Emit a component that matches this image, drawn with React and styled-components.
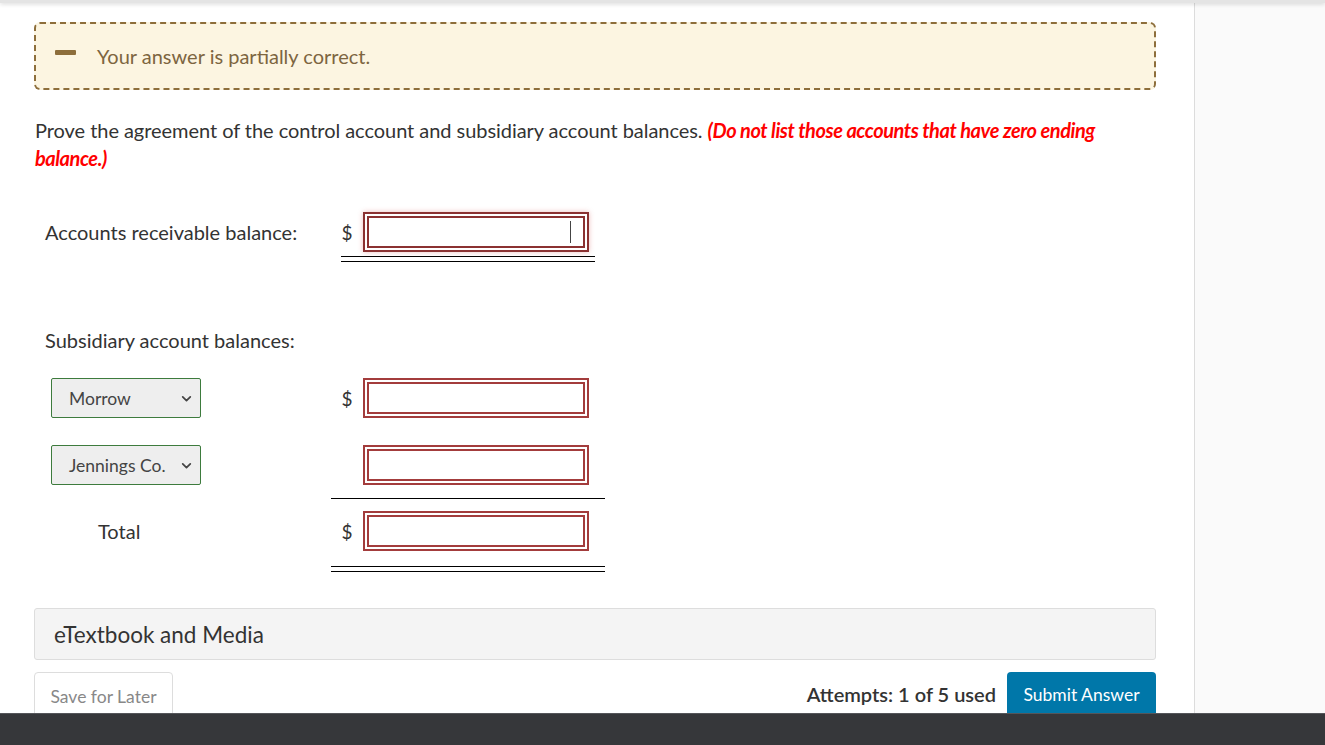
import React from 'react';
import styled, { createGlobalStyle } from 'styled-components';

const GlobalStyle = createGlobalStyle`
    html, body {
        margin: 0;
        padding: 0;
        height: 100%;
        background: #fff;
        font-family: Lato, "Open Sans", sans-serif;
        color: #333;
    }
    #root {
        height: 100%;
    }
`;

const Page = styled.div`
    display: flex;
    height: 745px;
    overflow: hidden;
    position: relative;
`;

const TopShade = styled.div`
    position: absolute;
    top: 0;
    left: 0;
    right: 0;
    height: 3px;
    background: #e4e4e4;
    box-shadow: 0 1px 4px rgba(0, 0, 0, 0.18);
`;

const Main = styled.main`
    width: 1195px;
    box-sizing: border-box;
    padding: 22px 38px 0 34px;
    border-right: 1px solid #dcdcdc;
`;

const Side = styled.aside`
    flex: 1;
    background: #fafafa;
`;

const Feedback = styled.div`
    display: flex;
    align-items: center;
    height: 68px;
    box-sizing: border-box;
    border: 2px dashed #8d6e3b;
    border-radius: 6px;
    background: #fcf5e1;
    padding-left: 19px;
`;

const Minus = styled.span`
    display: inline-block;
    width: 21px;
    height: 5px;
    border-radius: 1px;
    background: #8d6e3b;
    margin: -8px 21px 0 0;
`;

const FeedbackText = styled.span`
    font-size: 20px;
    color: #7d6540;
`;

const Question = styled.p`
    margin: 26px 0 0 1px;
    font-size: 20px;
    line-height: 28px;
    letter-spacing: -0.05px;
`;

const Hint = styled.em`
    color: #f00;
    font-weight: 700;
    letter-spacing: -0.45px;
`;

const Form = styled.div`
    margin-top: 40px;
`;

const Row = styled.div`
    display: flex;
    align-items: center;
    height: ${p => p.h || 40}px;
    margin-top: ${p => p.mt || 0}px;
`;

const LabelCell = styled.div`
    width: 297px;
    box-sizing: border-box;
    padding-left: ${p => p.pl || 11}px;
    font-size: 20px;
`;

const Dollar = styled.span`
    width: 32px;
    text-align: center;
    font-size: 19px;
    color: #333;
`;

const Amount = styled.div`
    width: 226px;
    height: 40px;
    box-sizing: border-box;
    border: 6px double ${p => (p.focus ? '#8b3131' : '#a33c3c')};
    background: #fff;
    display: flex;
    align-items: center;
    justify-content: flex-end;
    padding-right: 12px;
    box-shadow: ${p => (p.focus ? '0 0 5px rgba(200, 60, 60, 0.35)' : 'none')};
`;

const Caret = styled.span`
    width: 1px;
    height: 22px;
    background: #444;
`;

const Rule = styled.div`
    margin-left: ${p => p.ml}px;
    width: ${p => p.w}px;
    height: ${p => (p.double ? 4 : 0)}px;
    border-top: 1px solid #000;
    border-bottom: ${p => (p.double ? '1px solid #000' : 'none')};
    margin-top: ${p => p.mt || 0}px;
`;

const SelectCell = styled.div`
    width: 297px;
`;

const SelectBox = styled.div`
    margin-left: 17px;
    width: 150px;
    height: 40px;
    box-sizing: border-box;
    border: 1px solid #3d7b3d;
    border-radius: 2px;
    background: #eee;
    display: flex;
    align-items: center;
    justify-content: space-between;
    padding: 0 7px 0 17px;
    font-size: 17.5px;
    color: #444;
`;

const Media = styled.div`
    margin-top: 36px;
    height: 52px;
    box-sizing: border-box;
    border: 1px solid #ddd;
    border-radius: 3px;
    background: #f4f4f4;
    display: flex;
    align-items: center;
    padding-left: 19px;
    font-size: 22.5px;
`;

const Actions = styled.div`
    display: flex;
    align-items: flex-start;
    margin-top: 12px;
`;

const SaveButton = styled.button`
    width: 139px;
    height: 48px;
    border: 1px solid #ddd;
    border-radius: 4px;
    background: #fff;
    font-family: Lato, sans-serif;
    font-size: 17.5px;
    color: #888;
`;

const Attempts = styled.span`
    margin-left: auto;
    margin-top: 10px;
    margin-right: 11px;
    font-size: 20px;
    font-weight: 600;
    color: #333;
`;

const SubmitButton = styled.button`
    width: 149px;
    height: 48px;
    border: none;
    border-radius: 4px;
    background: #0077a9;
    font-family: Lato, sans-serif;
    font-size: 17.5px;
    color: #fff;
    padding-bottom: 4px;
`;

const BottomBar = styled.div`
    position: absolute;
    left: 0;
    right: 0;
    bottom: 0;
    height: 31px;
    background: #36373a;
    border-top: 1px solid #55565a;
`;

const Chevron = () => (
    <svg width="13" height="13" viewBox="0 0 12 12">
        <path d="M2.5 4.5 L6 8 L9.5 4.5" fill="none" stroke="#444" strokeWidth="1.6" strokeLinecap="round" strokeLinejoin="round" />
    </svg>
);

const Select = ({ value }) => (
    <SelectCell>
        <SelectBox>
            <span>{value}</span>
            <Chevron />
        </SelectBox>
    </SelectCell>
);

export default function App() {
    return (
        <Page>
            <GlobalStyle />
            <TopShade />
            <Main>
                <Feedback>
                    <Minus />
                    <FeedbackText>Your answer is partially correct.</FeedbackText>
                </Feedback>
                <Question>
                    Prove the agreement of the control account and subsidiary account balances.{' '}
                    <Hint>(Do not list those accounts that have zero ending balance.)</Hint>
                </Question>
                <Form>
                    <Row>
                        <LabelCell>Accounts receivable balance:</LabelCell>
                        <Dollar>$</Dollar>
                        <Amount focus>
                            <Caret />
                        </Amount>
                    </Row>
                    <Rule double ml={307} w={254} mt={4} />
                    <Row mt={58}>
                        <LabelCell>Subsidiary account balances:</LabelCell>
                    </Row>
                    <Row mt={18}>
                        <Select value="Morrow" />
                        <Dollar>$</Dollar>
                        <Amount />
                    </Row>
                    <Row mt={27}>
                        <Select value="Jennings Co." />
                        <Dollar />
                        <Amount />
                    </Row>
                    <Rule ml={297} w={274} mt={13} />
                    <Row mt={12}>
                        <LabelCell pl={64}>Total</LabelCell>
                        <Dollar>$</Dollar>
                        <Amount />
                    </Row>
                    <Rule double ml={297} w={274} mt={15} />
                </Form>
                <Media>eTextbook and Media</Media>
                <Actions>
                    <SaveButton>Save for Later</SaveButton>
                    <Attempts>Attempts: 1 of 5 used</Attempts>
                    <SubmitButton>Submit Answer</SubmitButton>
                </Actions>
            </Main>
            <Side />
            <BottomBar />
        </Page>
    );
}
